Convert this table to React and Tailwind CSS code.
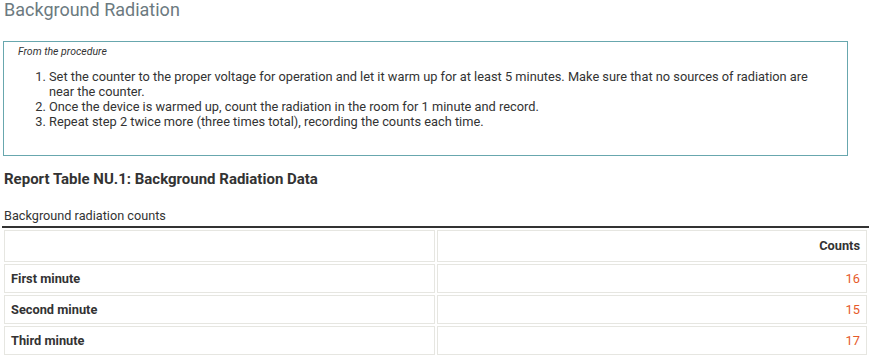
import React from "react";

const steps = [
    "Set the counter to the proper voltage for operation and let it warm up for at least 5 minutes. Make sure that no sources of radiation are near the counter.",
    "Once the device is warmed up, count the radiation in the room for 1 minute and record.",
    "Repeat step 2 twice more (three times total), recording the counts each time.",
];

const rows = [
    { label: "First minute", count: 16 },
    { label: "Second minute", count: 15 },
    { label: "Third minute", count: 17 },
];

export default function App() {
    return (
        <div className="w-[874px] h-[361px] overflow-hidden bg-white px-[2px] font-['Roboto',sans-serif] text-[#333]">
            <h2 className="pl-[2px] text-[18px] leading-[20px] text-[#6c7a80]">Background Radiation</h2>

            {/* procedure box */}
            <div className="mt-[21px] ml-[1px] w-[845px] border border-[#68a7ae] pl-[14px] pr-[14px] pt-[4px] pb-[26px]">
                <p className="text-[10.5px] leading-[12px] italic">From the procedure</p>
                <ol className="mt-[11px] list-decimal pl-[31px] text-[12.8px] leading-[15px]">
                    {steps.map((s, i) => (
                        <li key={i}>{s}</li>
                    ))}
                </ol>
            </div>

            <h3 className="mt-[13px] pl-[2px] text-[15px] leading-[20px] font-bold">
                Report Table NU.1: Background Radiation Data
            </h3>

            <p className="mt-[19px] pl-[2px] text-[12.7px] leading-[15px]">Background radiation counts</p>

            {/* data table */}
            <table className="mt-[3px] w-[867px] border-separate border-spacing-[2px] border-t-2 border-[#333] text-[12.8px]">
                <thead>
                    <tr>
                        <th className="w-1/2 border border-[#e6e6e1] px-[6px] py-[8px] leading-[14px]"></th>
                        <th className="w-1/2 border border-[#e6e6e1] px-[6px] py-[8px] text-right font-bold leading-[14px]">Counts</th>
                    </tr>
                </thead>
                <tbody>
                    {rows.map((r) => (
                        <tr key={r.label}>
                            <td className="border border-[#e6e6e1] px-[6px] py-[6px] font-bold leading-[15px]">{r.label}</td>
                            <td className="border border-[#e6e6e1] px-[6px] py-[6px] text-right leading-[15px] text-[#e65a2a]">{r.count}</td>
                        </tr>
                    ))}
                </tbody>
            </table>
        </div>
    );
}
